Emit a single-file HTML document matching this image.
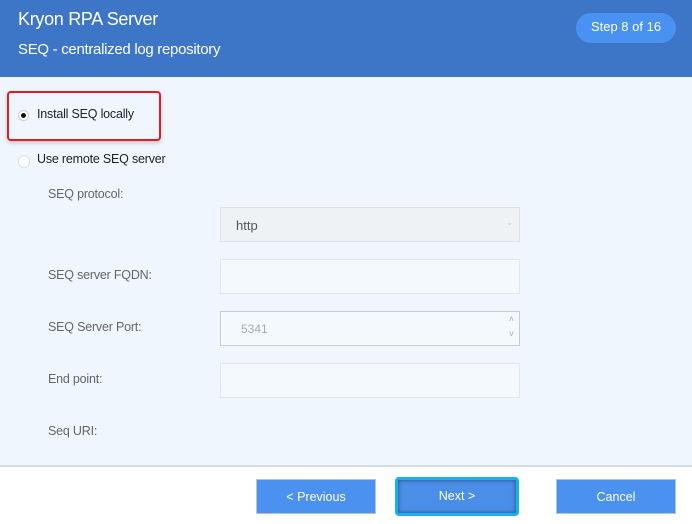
<!DOCTYPE html><html><head><style>
body{margin:0;width:692px;height:524px;overflow:hidden;font-family:"Liberation Sans",sans-serif;background:#fff;position:relative}
.a{position:absolute}
.hdr{left:0;top:0;width:692px;height:77px;background:#3d76c7;color:#fff}
.body{left:0;top:77px;width:692px;height:388px;background:#eff6fd}
.lbl{color:#666;font-size:12.5px;left:48px;letter-spacing:-0.2px}
.f{left:220px;width:298px;height:33px;border:1px solid #dfe6ee;background:#f4f9fe;box-sizing:content-box}
.btn{background:#4b92f0;color:#fff;font-size:12.5px;text-align:center;line-height:34px;border:1px solid #b8c4d0;box-sizing:border-box}
</style></head><body>
<div class="a hdr">
<div class="a" style="left:18px;top:9px;font-size:18px;letter-spacing:-0.3px">Kryon RPA Server</div>
<div class="a" style="left:18px;top:41px;font-size:15px;letter-spacing:-0.3px">SEQ - centralized log repository</div>
<div class="a" style="left:576px;top:13px;width:100px;height:30px;border-radius:15px;background:#4a92f1;text-align:center;line-height:28px;font-size:13px">Step 8 of 16</div>
</div>
<div class="a body"></div>
<div class="a" style="left:7px;top:91px;width:150px;height:46px;border:2px solid #e31b23;border-radius:4px;box-shadow:0 2px 4px rgba(0,0,0,.2)"></div>
<div class="a" style="left:18px;top:110px;width:9px;height:9px;border-radius:50%;border:1px solid #ccc;background:#fff"></div>
<div class="a" style="left:21px;top:113px;width:5px;height:5px;border-radius:50%;background:#111"></div>
<div class="a" style="left:37px;top:107px;font-size:12.5px;color:#222;letter-spacing:-0.2px">Install SEQ locally</div>
<div class="a" style="left:18px;top:155px;width:10px;height:11px;border-radius:50%;border:1px solid #ddd;background:#fff"></div>
<div class="a" style="left:37px;top:152px;font-size:12.5px;color:#222;letter-spacing:-0.2px">Use remote SEQ server</div>
<div class="a lbl" style="top:187px">SEQ protocol:</div>
<div class="a lbl" style="top:268px">SEQ server FQDN:</div>
<div class="a lbl" style="top:320px">SEQ Server Port:</div>
<div class="a lbl" style="top:372px">End point:</div>
<div class="a lbl" style="top:424px">Seq URI:</div>
<div class="a f" style="top:207px;background:#eff2f5;border-color:#dde2e8"><span class="a" style="left:15px;top:10px;font-size:13px;color:#555">http</span><span class="a" style="right:6px;top:10px;font-size:8px;color:#ccc">⌄</span></div>
<div class="a f" style="top:259px"></div>
<div class="a f" style="top:311px;border-color:#c8ccd2"><span class="a" style="left:20px;top:10px;font-size:12px;color:#aaa">5341</span><span class="a" style="right:5px;top:2px;font-size:9px;color:#aaa">˄</span><span class="a" style="right:5px;top:17px;font-size:9px;color:#aaa">˅</span></div>
<div class="a f" style="top:363px"></div>
<div class="a" style="left:0;top:465px;width:692px;height:2px;background:#d5dbe2"></div>
<div class="a btn" style="left:256px;top:479px;width:120px;height:35px">&lt; Previous</div>
<div class="a btn" style="left:395px;top:477px;width:124px;height:39px;border:3px solid #19b1e6;border-radius:4px;line-height:33px;background:#4a8ee8;box-shadow:inset 0 0 4px rgba(0,0,0,.5)">Next &gt;</div>
<div class="a btn" style="left:556px;top:479px;width:120px;height:35px">Cancel</div>
</body></html>
